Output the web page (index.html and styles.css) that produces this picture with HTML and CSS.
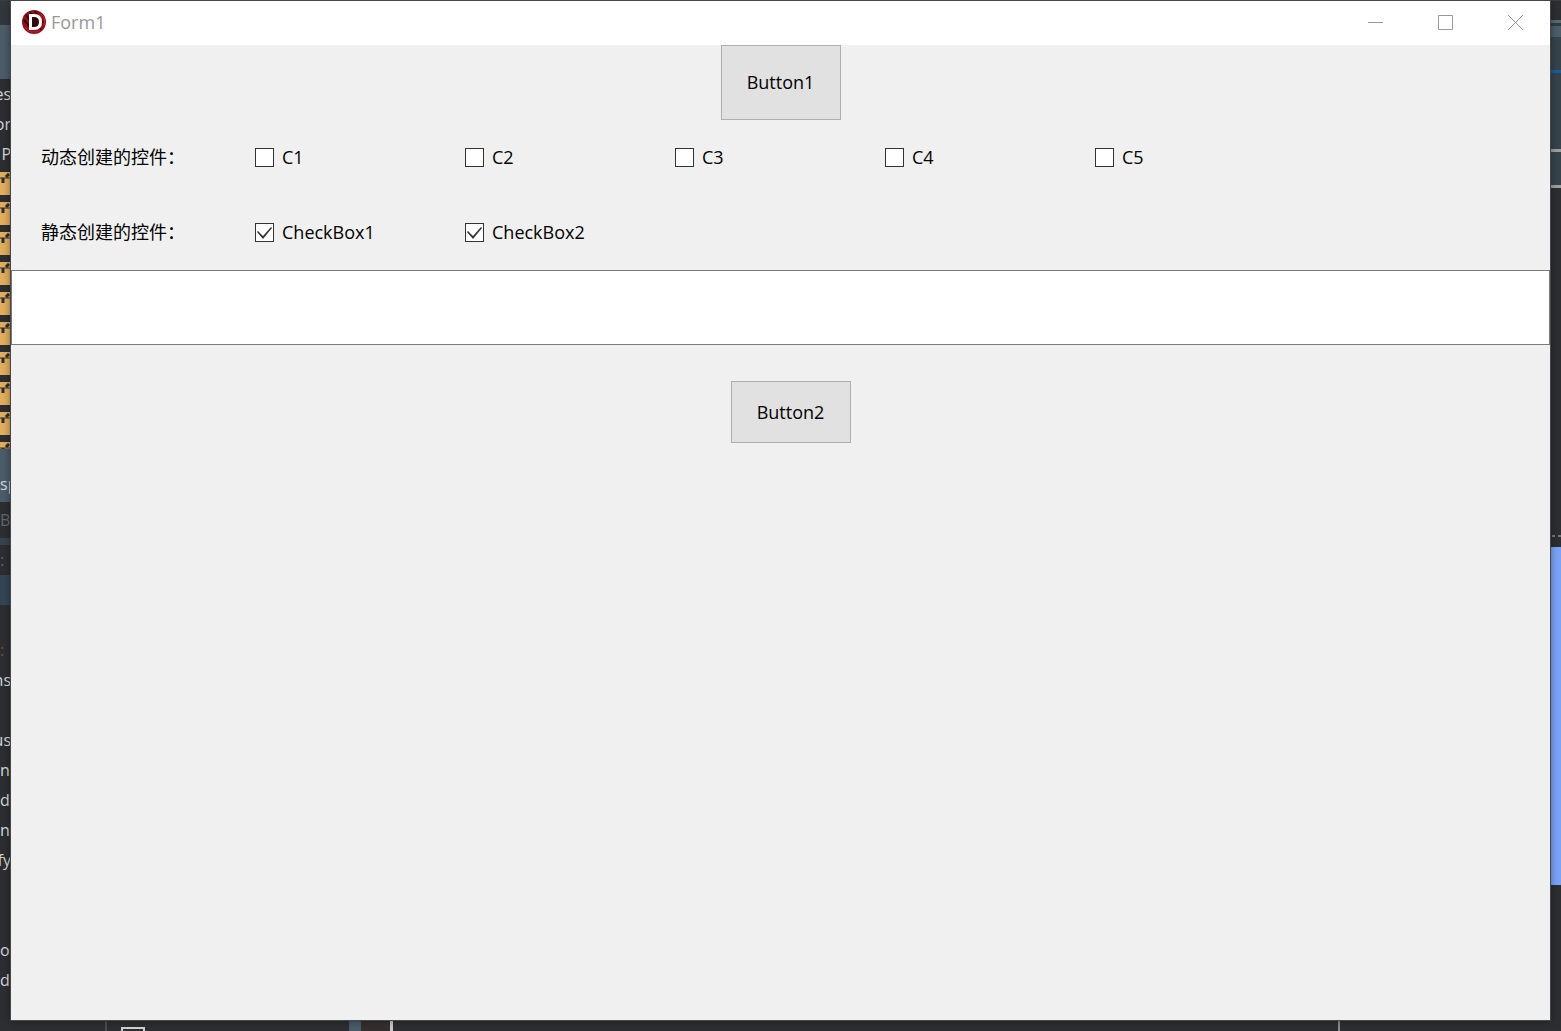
FILE: index.html
```html
<!DOCTYPE html>
<html lang="zh-CN">
<head>
  <meta charset="UTF-8">
  <meta name="viewport" content="width=device-width, initial-scale=1.0">
  <title>Form1</title>
  <link rel="stylesheet" href="styles.css">
</head>
<body>

  <div class="edge-top"></div>

  <!-- 左侧编辑器 -->
  <div class="edge-left">
    <div class="tab"></div>
    <div class="line right">es</div>
    <div class="line right">or</div>
    <div class="line right">P</div>
    <div class="marks" id="marks"></div>
    <div class="panel">sp</div>
    <div class="search">Bu</div>
    <div class="divider"></div>
    <div class="line dim">:</div>
    <div class="line selected"></div>
    <div class="line"></div>
    <div class="line keyword">:</div>
    <div class="line right">ns</div>
    <div class="line"></div>
    <div class="line right">us</div>
    <div class="line">nt</div>
    <div class="line">dr</div>
    <div class="line">nt</div>
    <div class="line right">fy</div>
    <div class="line"></div>
    <div class="line"></div>
    <div class="line">or</div>
    <div class="line">de</div>
  </div>

  <!-- 主窗口 -->
  <main class="window">
    <header class="titlebar">
      <svg class="logo" width="24" height="24" viewBox="0 0 24 24">
        <circle cx="12" cy="12" r="12" fill="#8e101b"/>
        <path d="M4 5l6 8M2 10l7 8M8 2l10 15M13 1l8 12M17 17l2 3" stroke="#3a070c" stroke-width="2"/>
        <path d="M3 17a10 10 0 0 0 15 3M19 4a10 10 0 0 1 3 11" fill="none" stroke="#c9202f" stroke-width="1"/>
        <path d="M8.500 5.500h3.500c4.500 0 6.500 2.500 6.500 6.500s-2 6.500-6.500 6.500H8.500z" fill="#32070b" stroke="#fff" stroke-width="3"/>
      </svg>
      <h1>Form1</h1>
      <div class="controls">
        <button type="button" aria-label="最小化"><svg width="15" height="15"><path d="M0 7.5h15"/></svg></button>
        <button type="button" aria-label="最大化"><svg width="15" height="15"><path d="M.5.5h14v14H.5z"/></svg></button>
        <button type="button" aria-label="关闭"><svg width="15" height="15"><path d="M0 0l15 15M15 0L0 15"/></svg></button>
      </div>
    </header>

    <div class="row center">
      <button type="button" class="btn">Button1</button>
    </div>

    <div class="row checks">
      <span class="caption">动态创建的控件：</span>
      <label><input type="checkbox"><span>C1</span></label>
      <label><input type="checkbox"><span>C2</span></label>
      <label><input type="checkbox"><span>C3</span></label>
      <label><input type="checkbox"><span>C4</span></label>
      <label><input type="checkbox"><span>C5</span></label>
    </div>

    <div class="row checks">
      <span class="caption">静态创建的控件：</span>
      <label><input type="checkbox" checked><span>CheckBox1</span></label>
      <label><input type="checkbox" checked><span>CheckBox2</span></label>
    </div>

    <textarea class="memo" aria-label="Memo1"></textarea>

    <div class="row center second">
      <button type="button" class="btn">Button2</button>
    </div>
  </main>

  <!-- 右侧编辑器 -->
  <div class="edge-right">
    <div class="head"></div>
    <div class="tools"></div>
    <div class="active"></div>
    <div class="list"></div>
    <div class="item"></div>
    <div class="dash"></div>
    <div class="scroll"></div>
  </div>

  <!-- 底部 -->
  <div class="edge-bottom">
    <i class="rule"></i>
    <i class="box"></i>
    <i class="thumb"></i>
    <i class="gutter"></i>
    <i class="rule last"></i>
  </div>

  <script>
    // 书签标记
    const marks = document.getElementById("marks");
    for (let i = 0; i < 10; i++) {
      const mark = document.createElement("div");
      mark.className = "mark";
      mark.innerHTML = '<svg width="11" height="10"><path d="M0 5h11" stroke-width="1"/><path d="M3 5v5M6 4l3-3" stroke-width="3"/></svg>';
      marks.appendChild(mark);
    }
  </script>

</body>
</html>
```

FILE: styles.css
```css
* {
  margin: 0;
  padding: 0;
  box-sizing: border-box;
}

body {
  display: grid;
  grid-template-columns: 11px 1fr 11px;
  grid-template-rows: 1px 1fr 11px;
  height: 100vh;
  overflow: hidden;
  background-color: #2d2e31;
  color: #000;
  font-family: "Open Sans", "Noto Sans CJK SC", sans-serif;
  font-size: 18px;
}

button,
textarea {
  font: inherit;
}

/* 上边和底边 */
.edge-top {
  grid-column: 1 / -1;
  background-color: #3b3c3f;
}

.edge-bottom {
  grid-column: 1 / -1;
  display: flex;
}

.rule {
  width: 2px;
  margin-left: 105px;
  background-color: #4b4d4e;
}

.box {
  width: 24px;
  height: 8px;
  margin: 7px 0 0 14px;
  border: 2px solid #d0d0d0;
}

.thumb {
  width: 12px;
  margin-left: 204px;
  background-color: #4a5a68;
}

.gutter {
  width: 32px;
  background-color: #352e2e;
  border-right: 3px solid #c8c8c8;
}

.rule.last {
  margin: 0 221px 0 auto;
  background-color: #8a8a8a;
}

/* 左侧 */
.edge-left {
  min-height: 0;
  overflow: hidden;
  color: #d8dade;
  font-size: 16px;
}

.tab {
  height: 78px;
  background: linear-gradient(#34383e 24px, #4c5c69 24px);
}

.line {
  display: flex;
  height: 30px;
  line-height: 30px;
  overflow: hidden;
}

.line.right {
  justify-content: flex-end;
}

.line.selected {
  background-color: #344654;
}

.line.keyword {
  color: #7a5536;
}

.line.dim {
  color: #66686a;
}

.marks {
  height: 280px;
  overflow: hidden;
}

.mark {
  height: 30px;
  padding-top: 4px;
  background: linear-gradient(transparent 3px, #e2ae5f 3px, #e2ae5f 26px, transparent 26px);
}

.mark svg {
  display: block;
  stroke: #2d2e31;
}

.panel {
  height: 53px;
  line-height: 70px;
  background-color: #4c5c69;
}

.search {
  height: 36px;
  line-height: 36px;
  color: #66686a;
}

.divider {
  height: 7px;
  background-color: #36444f;
}

/* 窗口 */
.window {
  position: relative;
  display: flex;
  flex-direction: column;
  min-width: 0;
  background-color: #f0f0f0;
  box-shadow: 0 0 0 1px #45474a, 0 0 8px rgba(0, 0, 0, 0.5);
}

.titlebar {
  display: flex;
  align-items: center;
  height: 44px;
  padding: 0 0 2px 11px;
  background-color: #fff;
}

.titlebar h1 {
  margin-left: 5px;
  color: #999;
  font-size: 18px;
  font-weight: normal;
}

.controls {
  display: flex;
  height: 100%;
  margin-left: auto;
}

.controls button {
  display: flex;
  align-items: center;
  justify-content: center;
  width: 70px;
  border: none;
  background: none;
}

.controls svg {
  fill: none;
  stroke: #999;
}

.row {
  display: flex;
  align-items: center;
  height: 75px;
}

.row.center {
  justify-content: center;
}

.row.second {
  height: 62px;
  margin-top: 36px;
  padding-left: 20px;
}

.btn {
  width: 120px;
  height: 100%;
  padding-bottom: 1px;
  border: 1px solid #adadad;
  background-color: #e1e1e1;
  color: #000;
}

.checks {
  padding-left: 30px;
}

.caption {
  width: 214px;
  padding-bottom: 3px;
}

.checks label {
  display: flex;
  align-items: center;
  gap: 8px;
  width: 210px;
}

.checks label span {
  padding-bottom: 2px;
}

.checks input {
  appearance: none;
  width: 19px;
  height: 19px;
  border: 1px solid #333;
  background-color: #fff;
}

.checks input:checked::before {
  content: "";
  display: block;
  height: 17px;
  background-color: #333;
  clip-path: polygon(1px 8px, 2px 7px, 7px 12px, 15px 3px, 16px 4px, 7px 15px);
}

.memo {
  height: 75px;
  border: 1px solid #7a7a7a;
  background-color: #fff;
  resize: none;
  outline: none;
}

/* 右侧 */
.edge-right {
  min-height: 0;
  overflow: hidden;
}

.head {
  height: 25px;
  background: linear-gradient(transparent 19px, #5b6972 19px, #5b6972 22px, #303c44 22px);
}

.tools {
  height: 11px;
  background-color: #4d5d6a;
}

.active {
  height: 36px;
  background-color: #36434b;
  border-bottom: 3px solid #155f9f;
}

.list {
  height: 79px;
  background-color: #36434b;
  border-bottom: 3px solid #a0a0a0;
}

.item {
  height: 36px;
  background-color: #36434b;
  border-bottom: 3px solid #a0a0a0;
}

.dash {
  height: 349px;
  margin-bottom: 10px;
  background: repeating-linear-gradient(90deg, transparent 0 2px, #777 2px 5px, transparent 5px 6px) bottom / 100% 2px no-repeat;
}

.scroll {
  height: 338px;
  background-color: #7ba3f8;
}
```
